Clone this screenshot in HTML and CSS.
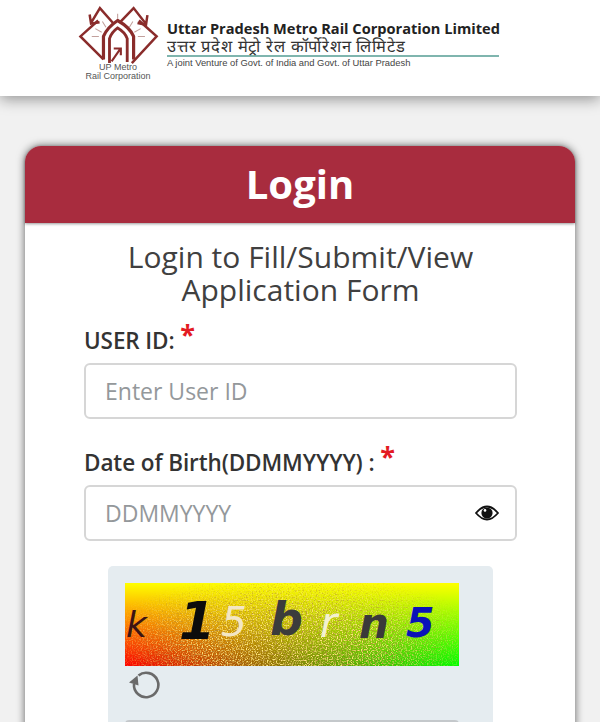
FILE: index.html
```html
<!DOCTYPE html>
<html>
<head>
  <meta charset="UTF-8">
  <title>UPMRC Login</title>
  <link rel="stylesheet" href="styles.css">
</head>
<body>

<div class="top_header">
  <div class="logo_mark">
    <svg width="90" height="67" viewBox="0 0 252 189">
      <g fill="none" stroke="#8a2c2b" stroke-width="7">
        <path d="M70 55 L20 100 L85 165"/>
        <path d="M185 55 L235 100 L165 175"/>
        <path d="M112 62 L75 20 L50 62 M46 38 L50 64 L74 60"/>
        <path d="M130 62 L170 20 L205 65 M209 40 L205 67 L181 62"/>
        <path d="M85 165 V100 Q95 75 125 55 Q160 75 170 100 V165" stroke-width="9"/>
        <path d="M102 175 V106 Q108 88 125 76 Q146 88 152 106 V172" stroke-width="8"/>
        <path d="M108 170 L132 136 M114 134 H134 V153" stroke-width="6"/>
      </g>
      <g stroke="#c2a09c" stroke-width="3">
        <path d="M52 100 H72 M62 78 L80 88 M82 58 L92 74 M125 36 V50 M168 58 L158 74 M190 78 L172 88 M202 100 H182"/>
      </g>
    </svg>
    <div class="logo_caption">UP Metro<br>Rail Corporation</div>
  </div>
  <div class="logo_text">
    <div class="logo_en">Uttar Pradesh Metro Rail Corporation Limited</div>
    <div class="logo_hi">उत्तर प्रदेश मेट्रो रेल कॉर्पोरेशन लिमिटेड</div>
    <div class="logo_sub">A joint Venture of Govt. of India and Govt. of Uttar Pradesh</div>
  </div>
</div>

<div class="login_card">
  <div class="card_head">Login</div>
  <div class="card_body">
    <h2 class="card_title">Login to Fill/Submit/View Application Form</h2>

    <label class="field_label">USER ID: <span class="req">*</span></label>
    <div class="text_box"><span class="hint">Enter User ID</span></div>

    <label class="field_label dob">Date of Birth(DDMMYYYY) : <span class="req">*</span></label>
    <div class="text_box">
      <span class="hint">DDMMYYYY</span>
      <svg class="eye" width="24" height="18" viewBox="0 0 24 18">
        <path d="M1 9 Q12 -4 23 9 Q12 22 1 9 Z" fill="#fff" stroke="#111" stroke-width="1.8"/>
        <circle cx="12" cy="9" r="5.6" fill="#111"/>
        <circle cx="10" cy="6.4" r="1.3" fill="#fff"/>
      </svg>
    </div>

    <div class="captcha_panel">
      <div class="captcha_img">
        <svg class="captcha_noise" width="333" height="83">
          <filter id="grain">
            <feTurbulence type="fractalNoise" baseFrequency="0.8" numOctaves="1" seed="4"/>
            <feColorMatrix values="0 0 0 0 1  0 0 0 0 0.8  0 0 0 0 0.2  4 0 0 0 -1.9"/>
          </filter>
          <filter id="grain_dark">
            <feTurbulence type="fractalNoise" baseFrequency="0.7" numOctaves="1" seed="11"/>
            <feColorMatrix values="0 0 0 0 0.45  0 0 0 0 0.25  0 0 0 0 0.05  4 0 0 0 -2"/>
          </filter>
          <rect width="333" height="83" filter="url(#grain_dark)"/>
          <rect width="333" height="83" filter="url(#grain)"/>
        </svg>
        <span class="cc c1">k</span>
        <span class="cc c2">1</span>
        <span class="cc c3">5</span>
        <span class="cc c4">b</span>
        <span class="cc c5">r</span>
        <span class="cc c6">n</span>
        <span class="cc c7">5</span>
      </div>
      <svg class="reload" width="34" height="32" viewBox="0 0 34 32">
        <path d="M10.5 7.5 A12.2 12.2 0 1 1 6 16" fill="none" stroke="#6a6a6a" stroke-width="2.6"/>
        <path d="M1 14.5 L9.5 7.5 L10.5 17.5 Z" fill="#6a6a6a"/>
      </svg>
      <div class="captcha_input"></div>
    </div>
  </div>
</div>

</body>
</html>
```

FILE: styles.css
```css
html, body {
  height: 722px;
  overflow: hidden;
}
body {
  background: #f1f1f1;
  font-family: "Open Sans", sans-serif;
  color: #333;
  margin: 0;
  padding: 0;
}
.top_header {
  height: 96px;
  background: #fff;
  box-shadow: 0 3px 14px rgba(0, 0, 0, 0.4);
  display: flex;
  padding-left: 73px;
  box-sizing: border-box;
}
.logo_mark {
  width: 90px;
  padding-top: 1px;
}
.logo_mark svg {
  display: block;
}
.logo_caption {
  font-family: "Liberation Sans", sans-serif;
  font-size: 9px;
  line-height: 8.5px;
  text-align: center;
  color: #555;
  margin-top: -5px;
  white-space: nowrap;
}
.logo_text {
  margin-left: 4px;
  padding-top: 18px;
  width: 332px;
}
.logo_en {
  font-size: 14.6px;
  font-weight: 700;
  line-height: 20px;
  color: #222;
  white-space: nowrap;
}
.logo_hi {
  font-size: 16.5px;
  letter-spacing: 0.75px;
  line-height: 16px;
  color: #333;
  white-space: nowrap;
  border-bottom: 2px solid #7fb5ae;
  height: 17px;
}
.logo_sub {
  font-family: "Liberation Sans", sans-serif;
  font-size: 9.4px;
  line-height: 12px;
  color: #444;
  white-space: nowrap;
}
.login_card {
  margin: 50px 25px 0;
  border-radius: 16px 16px 0 0;
  background: #fff;
  box-shadow: 0 0 8px rgba(0, 0, 0, 0.6);
}
.card_head {
  height: 77px;
  background: #a82c3e;
  border-radius: 16px 16px 0 0;
  color: #fff;
  font-size: 40px;
  font-weight: 700;
  line-height: 76px;
  text-align: center;
  box-shadow: 0 1px 3px rgba(0, 0, 0, 0.4);
}
.card_body {
  padding: 17px 58px 0 59px;
}
.card_title {
  font-size: 30px;
  font-weight: 400;
  line-height: 33px;
  text-align: center;
  color: #404040;
  margin: 0 30px 20px;
}
.field_label {
  display: block;
  font-size: 22.5px;
  font-weight: 600;
  letter-spacing: -0.1px;
  line-height: 30px;
  margin-bottom: 7px;
  white-space: nowrap;
}
.field_label.dob {
  margin-top: 29px;
}
.req {
  color: #e31b23;
  font-size: 27px;
  line-height: 0;
  vertical-align: 5px;
  font-weight: 700;
}
.text_box {
  height: 52px;
  border: 2px solid #d6d6d6;
  border-radius: 6px;
  background: #fff;
  display: flex;
  align-items: center;
  justify-content: space-between;
  padding: 0 16px 0 19px;
}
.hint {
  font-size: 23px;
  color: #94989b;
}
.captcha_panel {
  margin: 25px 24px 0;
  background: #e5ecf0;
  border-radius: 5px 5px 0 0;
  height: 200px;
  padding: 17px 34px 0 17px;
  box-sizing: border-box;
}
.captcha_img {
  position: relative;
  height: 83px;
  background: linear-gradient(to bottom, #ff0 0%, rgba(255, 255, 0, 0) 100%), linear-gradient(to right, #f00, #0f0);
  overflow: hidden;
}
.captcha_noise {
  position: absolute;
  left: 0;
  top: 0;
  filter: blur(0.5px);
  -webkit-mask-image: radial-gradient(ellipse at 50% 75%, #000 35%, transparent 85%);
}
.cc {
  position: absolute;
  font-family: "DejaVu Sans", sans-serif;
  font-style: italic;
}
.c1 { left: 1px; top: 21px; font-size: 36px; color: #3c1414; }
.c2 { left: 54px; top: 8px; font-size: 52px; font-weight: 700; color: #0c0c0c; }
.c3 { left: 96px; top: 15px; font-size: 41px; color: #f3e6c4; }
.c4 { left: 145px; top: 9px; font-size: 46px; font-weight: 700; color: #3c3c3c; }
.c5 { left: 195px; top: 15px; font-size: 42px; color: #f3f0d0; }
.c6 { left: 234px; top: 16px; font-size: 42px; font-weight: 700; color: #3a3a3a; }
.c7 { left: 281px; top: 16px; font-size: 41px; font-weight: 700; color: #0a12b8; }
.reload {
  display: block;
  margin: 2px 0 0 3px;
}
.captcha_input {
  height: 40px;
  margin-top: 20px;
  background: #fff;
  border: 2px solid #c4c8cb;
  border-radius: 4px;
}
```
